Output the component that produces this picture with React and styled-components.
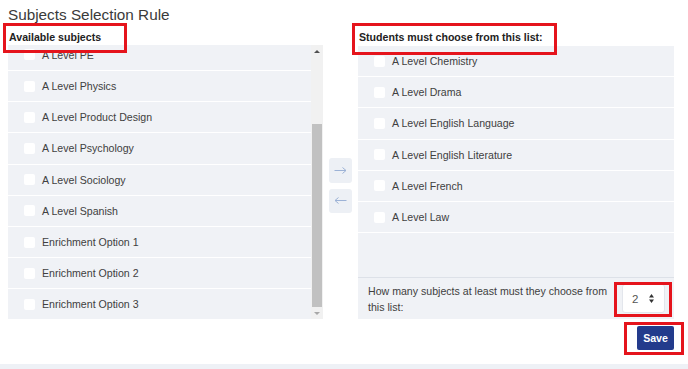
import React from 'react'
import styled, { createGlobalStyle } from 'styled-components'

const available = [
    'A Level PE',
    'A Level Physics',
    'A Level Product Design',
    'A Level Psychology',
    'A Level Sociology',
    'A Level Spanish',
    'Enrichment Option 1',
    'Enrichment Option 2',
    'Enrichment Option 3',
]

const chosen = [
    'A Level Chemistry',
    'A Level Drama',
    'A Level English Language',
    'A Level English Literature',
    'A Level French',
    'A Level Law',
]


const GlobalStyle = createGlobalStyle`
    html, body {
        margin: 0;
        padding: 0;
        background: #eef1f6;
        font-family: "Liberation Sans", Arial, sans-serif;
    }
`


const App = () => {

    return (
        <>
            <GlobalStyle />
            <Page>
                <Title>Subjects Selection Rule</Title>
                <Columns>
                    <LabelCell>
                        <Marked $t={6} $r={26} $b={8} $l={5}>
                            <Label>Available subjects</Label>
                        </Marked>
                    </LabelCell>
                    <div />
                    <LabelCell>
                        <Marked $t={6} $r={14} $b={10} $l={6}>
                            <Label>Students must choose from this list:</Label>
                        </Marked>
                    </LabelCell>

                    <Panel>
                        <LeftList>
                            {available.map(name => <Subject key={name} name={name} />)}
                        </LeftList>
                        <Scrollbar>
                            <ScrollArrow $dir="up" />
                            <ScrollTrack>
                                <ScrollThumb $size={183} />
                            </ScrollTrack>
                            <ScrollArrow $dir="down" />
                        </Scrollbar>
                    </Panel>

                    <Movers>
                        <MoveButton><Arrow dir="right" /></MoveButton>
                        <MoveButton><Arrow dir="left" /></MoveButton>
                    </Movers>

                    <RightPanel>
                        <RightList>
                            {chosen.map(name => <Subject key={name} name={name} />)}
                        </RightList>
                        <Footer>
                            <FooterText>How many subjects at least must they choose from this list:</FooterText>
                            <Marked $t={2} $r={7} $b={4} $l={8}>
                                <NumberBox>
                                    <span>2</span>
                                    <svg width="5" height="9" viewBox="0 0 5 9">
                                        <path d="M2.5 0 L5 3.4 L0 3.4 Z" fill="#333" />
                                        <path d="M2.5 9 L5 5.6 L0 5.6 Z" fill="#333" />
                                    </svg>
                                </NumberBox>
                            </Marked>
                        </Footer>
                    </RightPanel>
                </Columns>
                <Actions>
                    <Marked $t={4} $r={10} $b={5} $l={13}>
                        <SaveButton>Save</SaveButton>
                    </Marked>
                </Actions>
            </Page>
        </>
    )

}


const Subject = ({ name }) => {

    return (
        <Row>
            <Check />
            <span>{name}</span>
        </Row>
    )

}


const Arrow = ({ dir }) => {

    const d = dir === 'right'
        ? 'M0.5 4.5 H12 M8.5 1.5 L12 4.5 L8.5 7.5'
        : 'M12.5 4.5 H1 M4.5 1.5 L1 4.5 L4.5 7.5'

    return (
        <svg width="13" height="9" viewBox="0 0 13 9">
            <path d={d} fill="none" stroke="#9cb2d6" strokeWidth="1" />
        </svg>
    )

}


const Page = styled.div`
    background: #fff;
    height: 364px;
    box-sizing: border-box;
    padding: 6px 14px 0 8px;
`

const Title = styled.h1`
    margin: 0;
    font-size: 15.3px;
    line-height: 18px;
    font-weight: normal;
    color: #3a3a3a;
`

const Columns = styled.div`
    display: grid;
    grid-template-columns: 315px 35px 316px;
    grid-template-rows: 16px 274px;
    margin-top: 5px;
`

const LabelCell = styled.div`
    display: flex;
    align-items: flex-start;
`

const Label = styled.span`
    font-size: 10.6px;
    line-height: 16px;
    font-weight: bold;
    color: #222;
    padding-left: 1px;
`

const Marked = styled.div`
    position: relative;
    display: inline-flex;

    &::after {
        content: '';
        position: absolute;
        top: ${p => -p.$t}px;
        right: ${p => -p.$r}px;
        bottom: ${p => -p.$b}px;
        left: ${p => -p.$l}px;
        border: 3px solid #e5141c;
        pointer-events: none;
        z-index: 2;
    }
`

const Panel = styled.div`
    display: flex;
    background: #f0f2f6;
    overflow: hidden;
`

const LeftList = styled.div`
    flex: 1;
    display: flex;
    flex-direction: column;
    justify-content: flex-end;
    overflow: hidden;

    & > div:last-child {
        border-bottom: none;
        height: 29.7px;
    }
`

const Row = styled.div`
    flex: none;
    height: 31.2px;
    box-sizing: border-box;
    border-bottom: 1.5px solid #fff;
    display: flex;
    align-items: center;
    gap: 7px;
    padding-left: 16px;
    font-size: 10.6px;
    color: #404040;
`

const Check = styled.span`
    width: 11px;
    height: 11px;
    background: #fff;
    border-radius: 2px;
    flex: none;
`

const Scrollbar = styled.div`
    width: 12px;
    flex: none;
    background: #f1f1f1;
    display: flex;
    flex-direction: column;
`

const ScrollArrow = styled.div`
    height: 12px;
    flex: none;
    display: flex;
    align-items: center;
    justify-content: center;

    &::before {
        content: '';
        border-left: 3px solid transparent;
        border-right: 3px solid transparent;
        ${p => p.$dir === 'up'
            ? 'border-bottom: 3.5px solid #505050;'
            : 'border-top: 3.5px solid #a8a8a8;'}
    }
`

const ScrollTrack = styled.div`
    flex: 1;
    display: flex;
    flex-direction: column;
    justify-content: flex-end;
    padding: 0 1px;
`

const ScrollThumb = styled.div`
    height: ${p => p.$size}px;
    background: #c1c1c1;
`

const Movers = styled.div`
    display: flex;
    flex-direction: column;
    align-items: center;
    justify-content: center;
    gap: 6px;
    padding-top: 7px;
`

const MoveButton = styled.button`
    width: 23px;
    height: 24.5px;
    border: none;
    border-radius: 3px;
    background: #edf0f5;
    padding: 0;
    display: flex;
    align-items: center;
    justify-content: center;
`

const RightPanel = styled.div`
    display: flex;
    flex-direction: column;
    background: #f0f2f6;
    overflow: hidden;
    margin-top: 1px;
`

const RightList = styled.div`
    flex: 1;
    display: flex;
    flex-direction: column;
`

const Footer = styled.div`
    flex: none;
    height: 42px;
    box-sizing: border-box;
    border-top: 1px solid #dde1e8;
    display: flex;
    align-items: center;
    gap: 4px;
    padding: 0 9px 0 10px;
`

const FooterText = styled.div`
    flex: 1;
    font-size: 10.6px;
    line-height: 16px;
    color: #404040;
`

const NumberBox = styled.div`
    width: 43px;
    height: 29px;
    box-sizing: border-box;
    background: #fff;
    border: 1px solid #e3e6ec;
    border-radius: 3px;
    display: flex;
    align-items: center;
    justify-content: space-between;
    padding: 0 10px 0 9px;
    font-size: 11.5px;
    color: #555;
`

const Actions = styled.div`
    display: flex;
    justify-content: flex-end;
    margin-top: 7px;
`

const SaveButton = styled.button`
    width: 37px;
    height: 24px;
    padding: 0;
    border: none;
    border-radius: 2px;
    background: #233b8c;
    color: #fff;
    font-family: "Liberation Sans", Arial, sans-serif;
    font-weight: bold;
    font-size: 10.6px;
`


export default App
